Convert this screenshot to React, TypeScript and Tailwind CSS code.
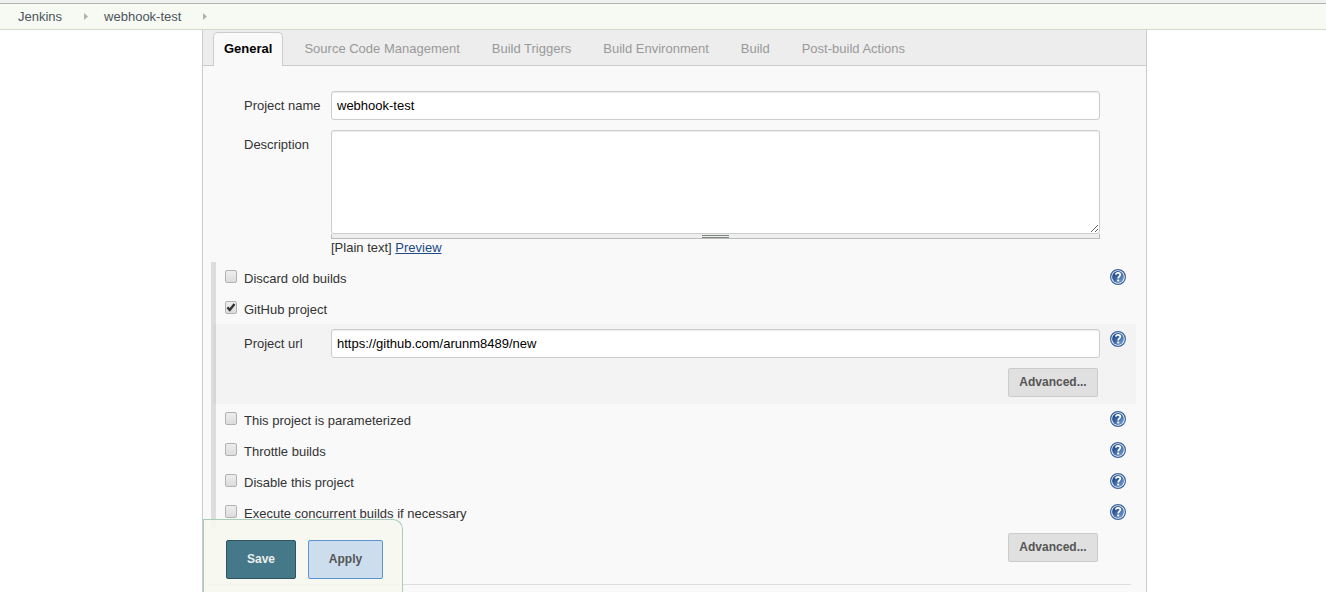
import React, { useState } from 'react';

const tabs = [
  'General',
  'Source Code Management',
  'Build Triggers',
  'Build Environment',
  'Build',
  'Post-build Actions',
];

const laterOptions = [
  { id: 'parameterized', label: 'This project is parameterized' },
  { id: 'throttle', label: 'Throttle builds' },
  { id: 'disable', label: 'Disable this project' },
  { id: 'concurrent', label: 'Execute concurrent builds if necessary' },
];

const fieldClass =
  'block w-full rounded-[3px] border border-[#ccc] bg-white px-[5px] text-[13px] text-black shadow-[inset_0_1px_1px_rgba(0,0,0,0.075)] outline-none';

function Separator() {
  return (
    <svg width="4" height="7" viewBox="0 0 4 7" aria-hidden="true">
      <path d="M0 0L4 3.5L0 7Z" fill="#b0b2ae" />
    </svg>
  );
}

function HelpButton({ topic }: { topic: string }) {
  return (
    <button type="button" aria-label={`Help for ${topic}`} className="block size-4 shrink-0 cursor-pointer">
      <svg width="16" height="16" viewBox="0 0 16 16" aria-hidden="true">
        <defs>
          <linearGradient id="helpFill" x1="0" y1="0" x2="1" y2="1">
            <stop offset="0.2" stopColor="#204a87" />
            <stop offset="1" stopColor="#7fa6d6" />
          </linearGradient>
        </defs>
        <circle cx="8" cy="8" r="7.4" fill="#f4f7fb" stroke="#3a639d" strokeWidth="1.2" />
        <circle cx="8" cy="8" r="5.9" fill="url(#helpFill)" />
        <path
          d="M5.7 5.7C5.9 4.4 6.8 3.8 8 3.8C9.4 3.8 10.3 4.5 10.3 5.7C10.3 7.3 8.2 7.3 8.2 9.4"
          fill="none"
          stroke="#fff"
          strokeWidth="1.7"
        />
        <rect x="7.2" y="10.6" width="2" height="1.8" fill="#fff" />
      </svg>
    </button>
  );
}

interface OptionRowProps {
  id: string;
  label: string;
  help?: boolean;
  defaultChecked?: boolean;
}

function OptionRow({ id, label, help = true, defaultChecked = false }: OptionRowProps) {
  const [checked, setChecked] = useState(defaultChecked);

  return (
    <div className="flex h-[31px] items-start pr-[10px] pl-[9px]">
      <span className="mt-2 grid size-[13px]">
        <input
          id={id}
          type="checkbox"
          checked={checked}
          onChange={(e) => setChecked(e.target.checked)}
          className="col-start-1 row-start-1 h-[13px] w-3 appearance-none rounded-[2px] border border-[#b2b2b2] bg-linear-to-b from-[#eee] to-[#dcdcdc]"
        />
        {checked && (
          <svg className="pointer-events-none col-start-1 row-start-1" width="12" height="13" viewBox="0 0 12 13" aria-hidden="true">
            <path d="M2.4 6.4L4.8 8.9L9.5 3" fill="none" stroke="#333" strokeWidth="2.4" />
          </svg>
        )}
      </span>
      <label htmlFor={id} className="mt-[9px] ml-[6px] leading-4">
        {label}
      </label>
      {help && (
        <div className="mt-[7px] ml-auto">
          <HelpButton topic={label} />
        </div>
      )}
    </div>
  );
}

function AdvancedButton() {
  return (
    <button
      type="button"
      className="h-[29px] w-[90px] rounded-[2px] border border-[#ccc] bg-[#e0e0e0] pb-[2px] text-[12px] font-bold text-[#555]"
    >
      Advanced...
    </button>
  );
}

export default function App() {
  const [activeTab, setActiveTab] = useState('General');
  const [name, setName] = useState('webhook-test');
  const [description, setDescription] = useState('');
  const [url, setUrl] = useState('https://github.com/arunm8489/new');

  return (
    <div className="flex min-h-screen flex-col bg-white font-['Liberation_Sans',Arial,sans-serif] text-[13px] text-[#333]">
      <nav
        aria-label="Breadcrumb"
        className="border-b border-[#d3d7cf] bg-[#f6faf2]"
      >
        <div className="h-[4px] border-b border-[#b4b4b4] bg-[#f0f0f0]" />
        <div className="flex h-[25px] items-center pl-[18px] text-[#4d545d]">
          <a href="#jenkins" className="mr-[22px]">Jenkins</a>
          <Separator />
          <a href="#job" className="mr-[22px] ml-4">webhook-test</a>
          <Separator />
        </div>
      </nav>

      <main className="mr-[179px] ml-[202px] grow border-x border-[#ccc] bg-[#f9f9f9]">
        <form onSubmit={(e) => e.preventDefault()}>
          <div role="tablist" className="flex h-9 items-end gap-[10px] border-b border-[#ccc] bg-[#ededed] pl-[10px]">
            {tabs.map((tab) => (
              <button
                key={tab}
                type="button"
                role="tab"
                aria-selected={tab === activeTab}
                onClick={() => setActiveTab(tab)}
                className={
                  tab === activeTab
                    ? '-mb-px h-[34px] rounded-t-[5px] border border-b-0 border-[#ccc] bg-[#f9f9f9] px-[10px] pb-[1px] font-bold whitespace-nowrap text-black'
                    : '-mb-px h-[34px] border border-b-0 border-transparent px-[10px] pb-[1px] whitespace-nowrap text-[#999]'
                }
              >
                {tab}
              </button>
            ))}
          </div>

          <div className="pt-[25px] pr-[10px] pl-2">
            <div className="flex pr-9 pl-[33px]">
              <label htmlFor="name" className="w-[87px] shrink-0 pt-[7px] leading-4">Project name</label>
              <input id="name" type="text" value={name} onChange={(e) => setName(e.target.value)} className={`${fieldClass} h-[29px]`} />
            </div>

            <div className="mt-[10px] flex pr-9 pl-[33px]">
              <label htmlFor="description" className="w-[87px] shrink-0 pt-[7px] leading-4">Description</label>
              <div className="grow">
                <textarea
                  id="description"
                  value={description}
                  onChange={(e) => setDescription(e.target.value)}
                  className={`${fieldClass} h-[104px] resize`}
                />
                <div className="flex h-[5px] cursor-row-resize items-end justify-center border border-t-0 border-[#bbb] bg-[#eee]">
                  <div className="h-[3px] w-[27px] border-y border-[#7f8680]" />
                </div>
                <div className="h-[23px] pt-[1px] leading-4">
                  [Plain text] <a href="#preview" className="text-[#204a87] underline">Preview</a>
                </div>
              </div>
            </div>

            <div className="border-l-[5px] border-[#ddd]">
              <OptionRow id="discard" label="Discard old builds" />
              <OptionRow id="github" label="GitHub project" help={false} defaultChecked />
              <div className="-ml-[3px] h-20 bg-black/[0.025] pt-[5px] pr-[10px] pl-[31px]">
                <div className="flex items-start">
                  <label htmlFor="url" className="w-[87px] shrink-0 pt-[7px] leading-4">Project url</label>
                  <input id="url" type="text" value={url} onChange={(e) => setUrl(e.target.value)} className={`${fieldClass} h-[29px]`} />
                  <div className="mt-[2px] ml-[10px]">
                    <HelpButton topic="Project url" />
                  </div>
                </div>
                <div className="mt-[10px] flex justify-end pr-7">
                  <AdvancedButton />
                </div>
              </div>
              {laterOptions.map((option) => (
                <OptionRow key={option.id} id={option.id} label={option.label} />
              ))}
            </div>

            <div className="mt-[5px] flex justify-end pr-[38px]">
              <AdvancedButton />
            </div>
          </div>
          <hr className="mt-[22px] mr-[15px] ml-[5px] border-[#ddd]" />

          {/* stays on screen while the form scrolls */}
          <div className="fixed bottom-0 left-[203px] flex h-[73px] gap-3 rounded-tr-[10px] border border-b-0 border-[#a9cdb9] bg-[#f6f8ee]/90 pt-5 pr-[19px] pl-[22px]">
            <button type="submit" className="h-[39px] w-[70px] rounded-[2px] border border-[#2f5361] bg-[#457888] pb-[2px] text-[12px] font-bold text-[#eee]">
              Save
            </button>
            <button type="button" className="h-[39px] w-[75px] rounded-[2px] border border-[#5c93d1] bg-[#ccdded] pb-[2px] text-[12px] font-bold text-[#555]">
              Apply
            </button>
          </div>
        </form>
      </main>
    </div>
  );
}
